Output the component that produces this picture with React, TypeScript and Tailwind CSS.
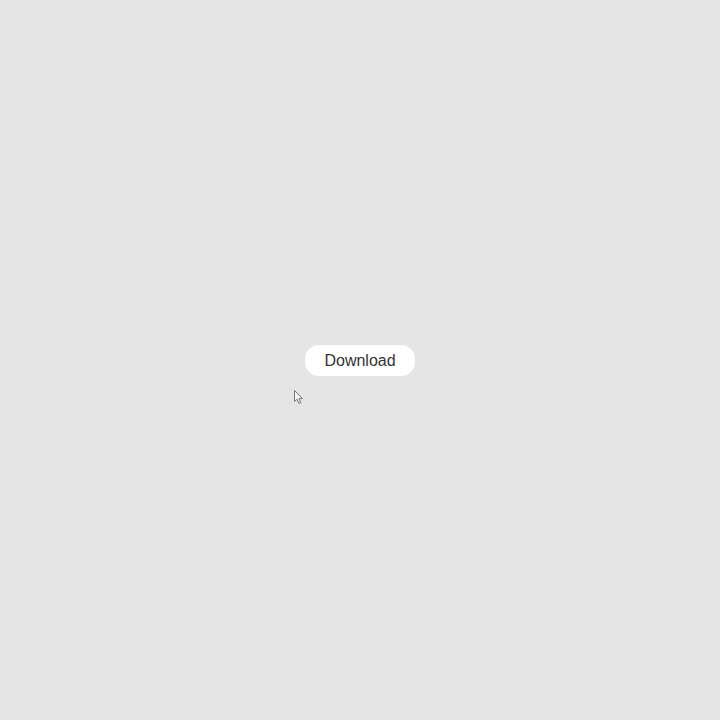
export default function App() {
  return (
    <div className="relative w-[720px] h-[720px] bg-[#e5e5e5] flex items-center justify-center" style={{ fontFamily: '"Liberation Sans", Arial, sans-serif' }}>
      <button className="h-[31px] w-[110px] rounded-[14px] bg-white text-[16px] text-[#333] flex items-center justify-center pt-[2px]">
        Download
      </button>
      <svg className="absolute left-[293px] top-[389px]" width="12" height="16" viewBox="0 0 12 16">
        <path d="M1.5 1.5 L1.5 12.5 L4 10.2 L6 14.5 L7.8 13.7 L5.9 9.6 L9.3 9.4 Z" fill="#f4f4f4" stroke="#777" strokeWidth="1" strokeLinejoin="round" />
      </svg>
    </div>
  );
}
